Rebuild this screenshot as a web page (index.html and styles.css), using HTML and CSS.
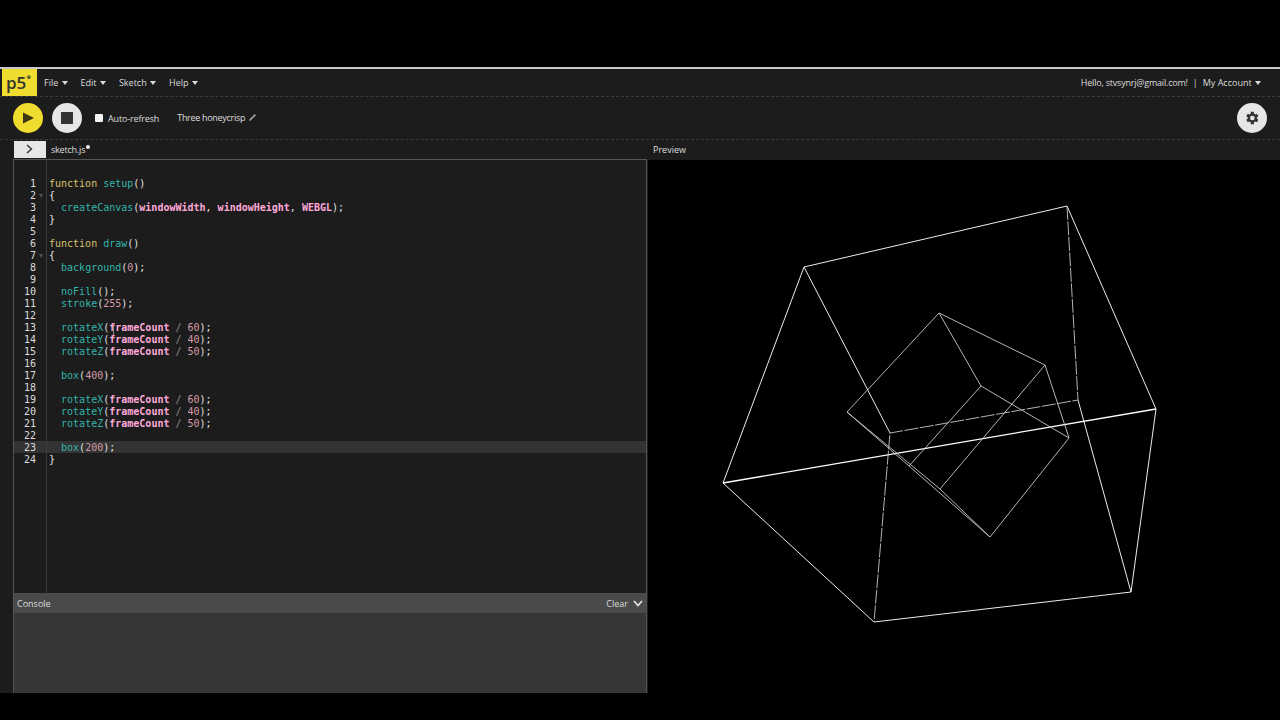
FILE: index.html
```html
<!DOCTYPE html>
<html lang="en">
<head>
<meta charset="UTF-8">
<meta name="viewport" content="width=device-width, initial-scale=1.0">
<title>Three honeycrisp</title>
<link rel="stylesheet" href="styles.css">
</head>
<body>
    <div class="app">
        <nav class="nav">
            <div class="logo">p5<sup>*</sup></div>
            <ul class="menu">
                <li>File <i class="caret"></i></li>
                <li>Edit <i class="caret"></i></li>
                <li>Sketch <i class="caret"></i></li>
                <li>Help <i class="caret"></i></li>
            </ul>
            <div class="account">
                <span class="hello">Hello, stvsynrj@gmail.com!</span>
                <span class="pipe">|</span>
                <span>My Account <i class="caret"></i></span>
            </div>
        </nav>

        <div class="toolbar">
            <button class="round play" aria-label="Play">
                <svg width="14" height="14" viewBox="0 0 14 14"><path d="M2 1.5 L13 7 L2 12.5 Z" fill="#3b3614"/></svg>
            </button>
            <button class="round stop" aria-label="Stop">
                <svg width="12" height="12" viewBox="0 0 12 12"><rect width="12" height="12" fill="#333"/></svg>
            </button>
            <label class="refresh"><span class="check"></span>Auto-refresh</label>
            <div class="sketch-name">
                Three honeycrisp
                <svg width="9" height="9" viewBox="0 0 9 9"><path d="M1 8 L1.5 6.3 L6.8 1 L8 2.2 L2.7 7.5 Z" fill="#a0a0a0"/></svg>
            </div>
            <button class="round settings" aria-label="Settings">
                <svg width="16" height="16" viewBox="0 0 24 24"><path fill="#333" fill-rule="evenodd" d="M19.4 13a7.6 7.6 0 0 0 0-2l2.2-1.7-2.2-3.7-2.6 1a7.6 7.6 0 0 0-1.7-1L14.7 2.8h-4.4l-.4 2.8a7.6 7.6 0 0 0-1.7 1l-2.6-1-2.2 3.7L5.6 11a7.6 7.6 0 0 0 0 2l-2.2 1.7 2.2 3.7 2.6-1a7.6 7.6 0 0 0 1.7 1l.4 2.8h4.4l.4-2.8a7.6 7.6 0 0 0 1.7-1l2.6 1 2.2-3.7zM12.5 15.5a3.5 3.5 0 1 1 0-7 3.5 3.5 0 0 1 0 7z"/></svg>
            </button>
        </div>

        <div class="tabs">
            <div class="tabs-left">
                <button class="collapse" aria-label="Open sidebar">
                    <svg width="8" height="10" viewBox="0 0 8 10"><path d="M1 1 L5.5 5 L1 9" fill="none" stroke="#333" stroke-width="1.4"/></svg>
                </button>
                <span class="file">sketch.js<i class="dot"></i></span>
            </div>
            <div class="tabs-right">Preview</div>
        </div>

        <div class="main">
            <div class="left">
                <div class="editor">
                    <div class="gutter">
                        <div>1</div>
                        <div>2<i class="fold"></i></div>
                        <div>3</div>
                        <div>4</div>
                        <div>5</div>
                        <div>6</div>
                        <div>7<i class="fold"></i></div>
                        <div>8</div>
                        <div>9</div>
                        <div>10</div>
                        <div>11</div>
                        <div>12</div>
                        <div>13</div>
                        <div>14</div>
                        <div>15</div>
                        <div>16</div>
                        <div>17</div>
                        <div>18</div>
                        <div>19</div>
                        <div>20</div>
                        <div>21</div>
                        <div>22</div>
                        <div>23</div>
                        <div>24</div>
                    </div>
                    <div class="code">
                        <div class="line"><span class="kw">function</span> <span class="fn">setup</span>()</div>
                        <div class="line">{</div>
                        <div class="line">  <span class="fn">createCanvas</span>(<span class="var">windowWidth</span>, <span class="var">windowHeight</span>, <span class="var">WEBGL</span>);</div>
                        <div class="line">}</div>
                        <div class="line"></div>
                        <div class="line"><span class="kw">function</span> <span class="fn">draw</span>()</div>
                        <div class="line">{</div>
                        <div class="line">  <span class="fn">background</span>(<span class="num">0</span>);</div>
                        <div class="line"></div>
                        <div class="line">  <span class="fn">noFill</span>();</div>
                        <div class="line">  <span class="fn">stroke</span>(<span class="num">255</span>);</div>
                        <div class="line"></div>
                        <div class="line">  <span class="fn">rotateX</span>(<span class="var">frameCount</span> <span class="op">/</span> <span class="num">60</span>);</div>
                        <div class="line">  <span class="fn">rotateY</span>(<span class="var">frameCount</span> <span class="op">/</span> <span class="num">40</span>);</div>
                        <div class="line">  <span class="fn">rotateZ</span>(<span class="var">frameCount</span> <span class="op">/</span> <span class="num">50</span>);</div>
                        <div class="line"></div>
                        <div class="line">  <span class="fn">box</span>(<span class="num">400</span>);</div>
                        <div class="line"></div>
                        <div class="line">  <span class="fn">rotateX</span>(<span class="var">frameCount</span> <span class="op">/</span> <span class="num">60</span>);</div>
                        <div class="line">  <span class="fn">rotateY</span>(<span class="var">frameCount</span> <span class="op">/</span> <span class="num">40</span>);</div>
                        <div class="line">  <span class="fn">rotateZ</span>(<span class="var">frameCount</span> <span class="op">/</span> <span class="num">50</span>);</div>
                        <div class="line"></div>
                        <div class="line">  <span class="fn">box</span>(<span class="num">200</span>);</div>
                        <div class="line">}</div>
                    </div>
                    <div class="active-row"></div>
                    <div class="pointer"></div>
                </div>
                <div class="console">
                    <div class="console-head">
                        <span>Console</span>
                        <span class="console-actions">Clear
                            <svg width="10" height="7" viewBox="0 0 10 7"><path d="M1 1 L5 5.5 L9 1" fill="none" stroke="#e6e6e6" stroke-width="1.6"/></svg>
                        </span>
                    </div>
                </div>
            </div>
            <div class="preview">
                <svg class="canvas" width="632" height="533" viewBox="648 160 632 533">
                    <g fill="none" stroke="#ececec" stroke-width="1">
                        <path d="M723 483 L804 267 L1067 206 L1156 409"/>
                        <path d="M804 267 L890 433"/>
                        <path d="M1156 409 L1131 592 L874 622 L723 483"/>
                        <path d="M1078 400 L1131 592"/>
                    </g>
                    <path d="M723 483 L1156 409" fill="none" stroke="#fff" stroke-width="1.3"/>
                    <g fill="none" stroke="#c8c8c8" stroke-width="0.9" stroke-dasharray="14 1.5">
                        <path d="M1067 206 L1078 400 L890 433 L874 622"/>
                    </g>
                    <g fill="none" stroke="#c8c8c8" stroke-width="0.9">
                        <path d="M939 313 L1045 365 L1069 438 L990 537 L940 489 L847 412 Z"/>
                        <path d="M939 313 L981 386 L1069 438"/>
                        <path d="M981 386 L909 466 L990 537"/>
                        <path d="M1045 365 L940 489"/>
                        <path d="M847 412 L909 466"/>
                    </g>
                </svg>
            </div>
        </div>
    </div>
</body>
</html>
```

FILE: styles.css
```css
/* page frame */
* {
    box-sizing: border-box;
}

body {
    margin: 0;
    height: 720px;
    overflow: hidden;
    background-color: #000;
    font-family: "Open Sans", sans-serif;
    font-size: 9px;
    color: #dcdcdc;
}

.app {
    margin-top: 67px;
    height: 626px;
    display: flex;
    flex-direction: column;
    background-color: #1c1c1c;
    border-top: 2px solid #c8c8c8;
}

/* top menu */
.nav {
    height: 28px;
    display: flex;
    align-items: center;
    padding-left: 2px;
    border-bottom: 1px dashed #3c3c3c;
}

.logo {
    width: 35px;
    height: 27px;
    background-color: #f0dc2e;
    color: #333;
    font-family: "Open Sans", sans-serif;
    font-weight: 600;
    font-size: 17px;
    line-height: 27px;
    padding-left: 4px;
}

.logo sup {
    font-size: 9px;
    line-height: 0;
}

.menu {
    display: flex;
    gap: 13px;
    list-style: none;
    margin: 0 0 0 7px;
    padding: 0;
}

.caret {
    display: inline-block;
    width: 0;
    height: 0;
    margin-left: 1px;
    vertical-align: 1px;
    border-left: 3px solid transparent;
    border-right: 3px solid transparent;
    border-top: 4px solid #dcdcdc;
}

.account {
    margin-left: auto;
    padding-right: 19px;
    display: flex;
    gap: 5px;
}

.hello {
    letter-spacing: -0.2px;
}

/* toolbar */
.toolbar {
    height: 43px;
    display: flex;
    align-items: center;
    padding: 0 13px;
    border-bottom: 1px dashed #3c3c3c;
}

.round {
    width: 30px;
    height: 30px;
    border: 0;
    border-radius: 50%;
    padding: 0;
    display: flex;
    align-items: center;
    justify-content: center;
    background-color: #e6e6e6;
}

.play {
    background-color: #f0dc2e;
    margin-right: 9px;
}

.refresh {
    display: flex;
    align-items: center;
    margin-left: 13px;
    margin-top: 1px;
    letter-spacing: -0.15px;
}

.check {
    width: 8px;
    height: 8px;
    margin-right: 5px;
    margin-top: -2px;
    background-color: #f4f4f4;
    border-radius: 1px;
}

.sketch-name {
    margin-left: 18px;
    margin-top: -1px;
    display: flex;
    align-items: center;
    gap: 3px;
    letter-spacing: -0.3px;
}

.settings {
    margin-left: auto;
}

/* file tab and preview title row */
.tabs {
    height: 19px;
    display: flex;
    margin-left: 14px;
}

.tabs-left {
    width: 634px;
    display: flex;
    align-items: center;
}

.collapse {
    width: 32px;
    height: 17px;
    border: 0;
    padding: 0;
    background-color: #e6e6e6;
}

.file {
    margin-left: 5px;
    position: relative;
    letter-spacing: -0.2px;
}

.dot {
    position: absolute;
    top: 2px;
    right: -5px;
    width: 4px;
    height: 4px;
    border-radius: 50%;
    background-color: #f0f0f0;
}

.tabs-right {
    display: flex;
    align-items: center;
    padding-left: 5px;
}

/* editor */
.main {
    flex: 1;
    display: flex;
    min-height: 0;
}

.left {
    width: 634px;
    margin-left: 13px;
    margin-right: 1px;
    display: flex;
    flex-direction: column;
    border: 1px solid #555;
    border-bottom: 0;
}

.editor {
    flex: 1;
    display: flex;
    position: relative;
    padding-top: 18px;
    font-family: "DejaVu Sans Mono", monospace;
    font-size: 10px;
    line-height: 12px;
}

.gutter {
    width: 33px;
    padding-right: 10px;
    text-align: right;
    border-right: 1px solid #3c3c3c;
    margin-top: -18px;
    padding-top: 18px;
    position: relative;
    z-index: 1;
}

.gutter div {
    position: relative;
}

.fold {
    position: absolute;
    top: 4px;
    right: -7px;
    border-left: 2.5px solid transparent;
    border-right: 2.5px solid transparent;
    border-top: 4px solid #555;
}

.code {
    padding-left: 2px;
    color: #e0e0e0;
    position: relative;
    z-index: 1;
}

.line {
    height: 12px;
    white-space: pre;
}

.active-row {
    position: absolute;
    left: 0;
    right: 0;
    top: 281px;
    height: 12px;
    background-color: #333;
}

.pointer {
    position: absolute;
    left: 99px;
    top: 166px;
    width: 1px;
    height: 9px;
    background-color: #888;
    z-index: 2;
}

.kw {
    color: #d9c46c;
}

.fn {
    color: #33b5ab;
}

.var {
    color: #ffa9d9;
    font-weight: bold;
}

.num {
    color: #d49aa8;
}

.op {
    color: #8a8a8a;
}

/* console */
.console {
    height: 100px;
    background-color: #363636;
}

.console-head {
    height: 20px;
    display: flex;
    align-items: center;
    justify-content: space-between;
    padding: 0 3px;
    background-color: #4a4a4a;
}

.console-actions {
    display: flex;
    align-items: center;
    gap: 5px;
}

/* sketch output */
.preview {
    flex: 1;
    background-color: #000;
    border-top: 1px solid #1c1c1c;
}

.canvas {
    display: block;
}
```
